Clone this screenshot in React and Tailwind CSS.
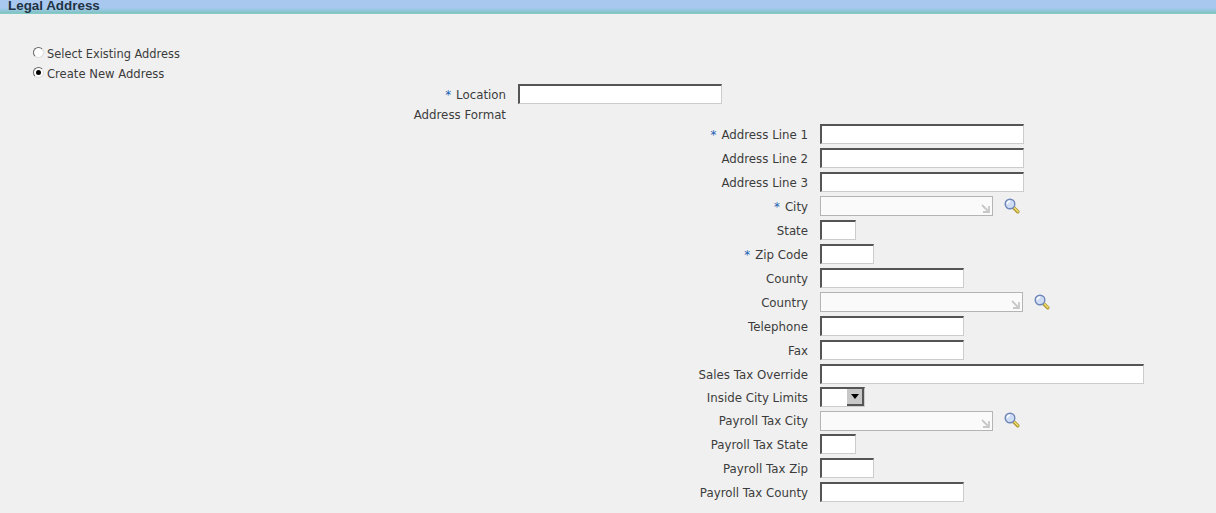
const F = "font-['DejaVu_Sans',sans-serif]";

function Lens() {
  return (
    <svg width="16" height="16" viewBox="0 0 16 16" className="block">
      <path d="M9.5 9.5 L13.8 13.8" stroke="#a8902a" strokeWidth="3.4" strokeLinecap="round" />
      <path d="M9.8 9.4 L14 13.6" stroke="#ecd96a" strokeWidth="1.6" strokeLinecap="round" />
      <circle cx="6" cy="6" r="4.8" fill="#cfdcf5" stroke="#6f86b8" strokeWidth="1.4" />
      <path d="M3.4 6 A2.7 2.7 0 0 1 6 3.3" stroke="#ffffff" strokeWidth="1.4" fill="none" />
    </svg>
  );
}

function Corner() {
  return (
    <svg width="10" height="10" viewBox="0 0 10 10" className="absolute right-[1px] bottom-[1px]">
      <path d="M1 1 L7 7 M8 2 V8 H2" stroke="#c8c8c8" strokeWidth="1.8" fill="none" />
    </svg>
  );
}

function Label({ text, req, w, nudge = "pt-[1px]" }) {
  return (
    <div className={`${w} ${nudge} shrink-0 text-right pr-[12px] whitespace-nowrap`}>
      {req && <span className="text-[#1a5fb4] mr-[5px]">*</span>}
      {text}
    </div>
  );
}

function TextInput({ w }) {
  return (
    <div className={`${w} h-5 bg-white border-t-2 border-l-2 border-r border-b border-t-[#555555] border-l-[#555555] border-r-[#cccccc] border-b-[#cccccc]`} />
  );
}

function Lov({ w }) {
  return (
    <div className="flex items-center">
      <div className={`${w} h-5 relative border border-[#b4b4b4] bg-[#fafafa]`}>
        <Corner />
      </div>
      <div className="ml-[11px] -mt-[1px]"><Lens /></div>
    </div>
  );
}

function Sel() {
  return (
    <div className="w-[45px] h-5 -mt-[1px] flex bg-white border-t-2 border-l-2 border-t-[#555555] border-l-[#555555] border-r border-b border-r-[#cccccc] border-b-[#cccccc]">
      <div className="flex-1" />
      <div className="w-[17px] bg-[#c8c8c8] border-r-2 border-b-2 border-r-[#555555] border-b-[#555555] flex items-center justify-center">
        <div className="w-0 h-0 border-x-[4px] border-x-transparent border-t-[5px] border-t-black" />
      </div>
    </div>
  );
}

function Radio({ on }) {
  return (
    <div className="w-[11px] h-[11px] rounded-full bg-white border border-t-[#666666] border-l-[#666666] border-r-[#dddddd] border-b-[#dddddd] -mt-[3px] flex items-center justify-center">
      {on && <div className="w-[5px] h-[5px] rounded-full bg-black" />}
    </div>
  );
}

function Row({ label, req, h = "h-6", nudge, children }) {
  return (
    <div className={`flex items-center ${h}`}>
      <Label text={label} req={req} w="w-[820px]" nudge={nudge} />
      {children}
    </div>
  );
}

export default function App() {
  return (
    <div className={`${F} w-[1216px] h-[513px] overflow-hidden bg-[#f0f0f0] text-[11.8px] leading-[16px] text-[#3c3c3c]`}>
      <div className="h-[14px] bg-[linear-gradient(#a8c8f0_55%,#7cc4c0_95%,#a0d4d0)] overflow-hidden pl-2">
        <div className="-mt-[2px] font-bold text-[13.4px] text-[#1f3344] font-['Liberation_Sans',sans-serif]">Legal Address</div>
      </div>

      <div className="pl-[33px] pt-[30px]">
        <div className="flex items-center h-5">
          <Radio />
          <span className="ml-[3px] text-[11.4px]">Select Existing Address</span>
        </div>
        <div className="flex items-center h-5">
          <Radio on />
          <span className="ml-[3px] text-[11.6px]">Create New Address</span>
        </div>
      </div>

      <div className="flex items-center h-5">
        <Label text="Location" req w="w-[518px]" />
        <TextInput w="w-[204px]" />
      </div>
      <div className="flex items-start h-[18px] pt-[2px]">
        <Label text="Address Format" w="w-[518px]" />
      </div>

      <Row label="Address Line 1" req><TextInput w="w-[204px]" /></Row>
      <Row label="Address Line 2"><TextInput w="w-[204px]" /></Row>
      <Row label="Address Line 3"><TextInput w="w-[204px]" /></Row>
      <Row label="City" req><Lov w="w-[173px]" /></Row>
      <Row label="State"><TextInput w="w-[36px]" /></Row>
      <Row label="Zip Code" req><TextInput w="w-[54px]" /></Row>
      <Row label="County"><TextInput w="w-[144px]" /></Row>
      <Row label="Country"><Lov w="w-[203px]" /></Row>
      <Row label="Telephone"><TextInput w="w-[144px]" /></Row>
      <Row label="Fax"><TextInput w="w-[144px]" /></Row>
      <Row label="Sales Tax Override"><TextInput w="w-[324px]" /></Row>
      <Row label="Inside City Limits" h="h-[23px]" nudge="pt-0"><Sel /></Row>
      <Row label="Payroll Tax City" h="h-[23px]" nudge="pt-0"><Lov w="w-[173px]" /></Row>
      <Row label="Payroll Tax State"><TextInput w="w-[36px]" /></Row>
      <Row label="Payroll Tax Zip"><TextInput w="w-[54px]" /></Row>
      <Row label="Payroll Tax County"><TextInput w="w-[144px]" /></Row>
    </div>
  );
}
